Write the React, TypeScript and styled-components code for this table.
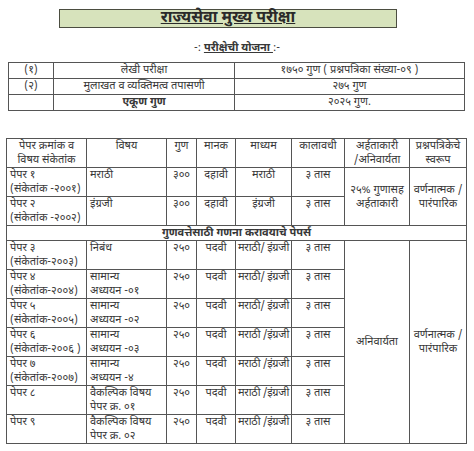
import styled, { createGlobalStyle } from "styled-components";

const GlobalStyle = createGlobalStyle`
  body {
    margin: 0;
    background: #ffffff;
    font-family: "Noto Sans Devanagari", "Lohit Devanagari", "Mangal", "Noto Serif Devanagari", "Liberation Serif", serif;
    color: #383838;
  }
`;

const Page = styled.div`
  width: 474px;
  height: 451px;
  overflow: hidden;
  padding-top: 9px;
  box-sizing: border-box;
`;

const TitleBox = styled.div`
  width: 338px;
  height: 19px;
  margin: 0 0 0 59px;
  box-sizing: border-box;
  border: 1.5px solid #4b4d40;
  background: #d7e3bc;
  display: flex;
  align-items: center;
  justify-content: center;
  font-size: 16px;
  font-weight: bold;
  text-decoration: underline;
  color: #2a2a2a;
`;

const Subtitle = styled.div`
  margin-top: 14px;
  text-align: center;
  font-size: 11px;
  line-height: 12px;
  u {
    font-weight: bold;
  }
`;

const Table = styled.table<{ $left: number; $width: number; $top: number }>`
  border-collapse: collapse;
  table-layout: fixed;
  margin-left: ${(p) => p.$left}px;
  margin-top: ${(p) => p.$top}px;
  width: ${(p) => p.$width}px;
  font-size: 11px;
`;

const Cell = styled.td<{ $align?: string; $bold?: boolean; $valign?: string; $h?: number }>`
  border: 1.5px solid #555;
  padding: 0 3px;
  text-align: ${(p) => p.$align || "left"};
  vertical-align: ${(p) => p.$valign || "top"};
  font-weight: ${(p) => (p.$bold ? "bold" : "normal")};
  height: ${(p) => (p.$h ? `${p.$h}px` : "auto")};
  line-height: 14px;
  white-space: nowrap;
`;

const MediumCell = styled(Cell)`
  padding: 0 1px 0 2px;
  letter-spacing: -0.3px;
`;

const SummaryCell = styled(Cell)`
  height: 15px;
  line-height: 13px;
  vertical-align: middle;
  text-align: center;
`;

const HeadCell = styled(Cell)`
  text-align: center;
  height: 27px;
`;

type Paper = {
  name: string;
  code?: string;
  subject: string[];
  marks: string;
  level: string;
  medium: string;
};

const papers: Paper[] = [
  { name: "पेपर ३", code: "(संकेतांक-२००३)", subject: ["निबंध"], marks: "२५०", level: "पदवी", medium: "मराठी/ इंग्रजी" },
  { name: "पेपर ४", code: "(संकेतांक-२००४)", subject: ["सामान्य", "अध्ययन -०१"], marks: "२५०", level: "पदवी", medium: "मराठी/ इंग्रजी" },
  { name: "पेपर ५", code: "(संकेतांक-२००५)", subject: ["सामान्य", "अध्ययन -०२"], marks: "२५०", level: "पदवी", medium: "मराठी/ इंग्रजी" },
  { name: "पेपर ६", code: "(संकेतांक-२००६ )", subject: ["सामान्य", "अध्ययन -०३"], marks: "२५०", level: "पदवी", medium: "मराठी /इंग्रजी" },
  { name: "पेपर ७", code: "(संकेतांक-२००७)", subject: ["सामान्य", "अध्ययन -४"], marks: "२५०", level: "पदवी", medium: "मराठी /इंग्रजी" },
  { name: "पेपर ८", subject: ["वैकल्पिक विषय", "पेपर क्र. ०१"], marks: "२५०", level: "पदवी", medium: "मराठी /इंग्रजी" },
  { name: "पेपर ९", subject: ["वैकल्पिक विषय", "पेपर क्र. ०२"], marks: "२५०", level: "पदवी", medium: "मराठी /इंग्रजी" },
];

export default function App() {
  return (
    <Page>
      <GlobalStyle />
      <TitleBox>राज्यसेवा मुख्य परीक्षा</TitleBox>
      <Subtitle>
        -: <u>परीक्षेची योजना </u>:-
      </Subtitle>

      <Table $left={8} $width={457} $top={8}>
        <colgroup>
          <col style={{ width: 45 }} />
          <col style={{ width: 181 }} />
          <col />
        </colgroup>
        <tbody>
          <tr>
            <SummaryCell>(१)</SummaryCell>
            <SummaryCell>लेखी परीक्षा</SummaryCell>
            <SummaryCell>१७५० गुण ( प्रश्नपत्रिका संख्या-०९ )</SummaryCell>
          </tr>
          <tr>
            <SummaryCell>(२)</SummaryCell>
            <SummaryCell>मुलाखत व व्यक्तिमत्व तपासणी</SummaryCell>
            <SummaryCell>२७५ गुण</SummaryCell>
          </tr>
          <tr>
            <SummaryCell />
            <SummaryCell $bold>एकूण गुण</SummaryCell>
            <SummaryCell>२०२५ गुण.</SummaryCell>
          </tr>
        </tbody>
      </Table>

      <Table $left={6} $width={461} $top={27}>
        <colgroup>
          <col style={{ width: 80 }} />
          <col style={{ width: 80 }} />
          <col style={{ width: 30 }} />
          <col style={{ width: 39 }} />
          <col style={{ width: 56 }} />
          <col style={{ width: 53 }} />
          <col style={{ width: 65 }} />
          <col />
        </colgroup>
        <tbody>
          <tr>
            <HeadCell>
              पेपर क्रमांक व
              <br />
              विषय संकेतांक
            </HeadCell>
            <HeadCell>विषय</HeadCell>
            <HeadCell>गुण</HeadCell>
            <HeadCell>मानक</HeadCell>
            <HeadCell>माध्यम</HeadCell>
            <HeadCell>कालावधी</HeadCell>
            <HeadCell>
              अर्हताकारी
              <br />
              /अनिवार्यता
            </HeadCell>
            <HeadCell>
              प्रश्नपत्रिकेचे
              <br />
              स्वरूप
            </HeadCell>
          </tr>
          <tr>
            <Cell $h={28}>
              पेपर १
              <br />
              (संकेतांक -२००१)
            </Cell>
            <Cell>मराठी</Cell>
            <Cell $align="center">३००</Cell>
            <Cell $align="center">दहावी</Cell>
            <Cell $align="center">मराठी</Cell>
            <Cell $align="center">३ तास</Cell>
            <Cell $align="center" $valign="middle" rowSpan={2}>
              २५% गुणासह
              <br />
              अर्हताकारी
            </Cell>
            <Cell $align="center" $valign="middle" rowSpan={2}>
              वर्णनात्मक /
              <br />
              पारंपारिक
            </Cell>
          </tr>
          <tr>
            <Cell $h={28}>
              पेपर २
              <br />
              (संकेतांक -२००२)
            </Cell>
            <Cell>इंग्रजी</Cell>
            <Cell $align="center">३००</Cell>
            <Cell $align="center">दहावी</Cell>
            <Cell $align="center">इंग्रजी</Cell>
            <Cell $align="center">३ तास</Cell>
          </tr>
          <tr>
            <Cell $align="center" $bold $h={14} colSpan={8}>
              गुणवत्तेसाठी गणना करावयाचे पेपर्स
            </Cell>
          </tr>
          {papers.map((p, i) => (
            <tr key={p.name}>
              <Cell $h={28}>
                {p.name}
                {p.code && (
                  <>
                    <br />
                    {p.code}
                  </>
                )}
              </Cell>
              <Cell>
                {p.subject.map((s, j) => (
                  <span key={s}>
                    {j > 0 && <br />}
                    {s}
                  </span>
                ))}
              </Cell>
              <Cell $align="center">{p.marks}</Cell>
              <Cell $align="center">{p.level}</Cell>
              <MediumCell>{p.medium}</MediumCell>
              <Cell $align="center">३ तास</Cell>
              {i === 0 && (
                <>
                  <Cell $align="center" $valign="middle" rowSpan={7}>
                    अनिवार्यता
                  </Cell>
                  <Cell $align="center" $valign="middle" rowSpan={7}>
                    वर्णनात्मक /
                    <br />
                    पारंपारिक
                  </Cell>
                </>
              )}
            </tr>
          ))}
        </tbody>
      </Table>
    </Page>
  );
}
